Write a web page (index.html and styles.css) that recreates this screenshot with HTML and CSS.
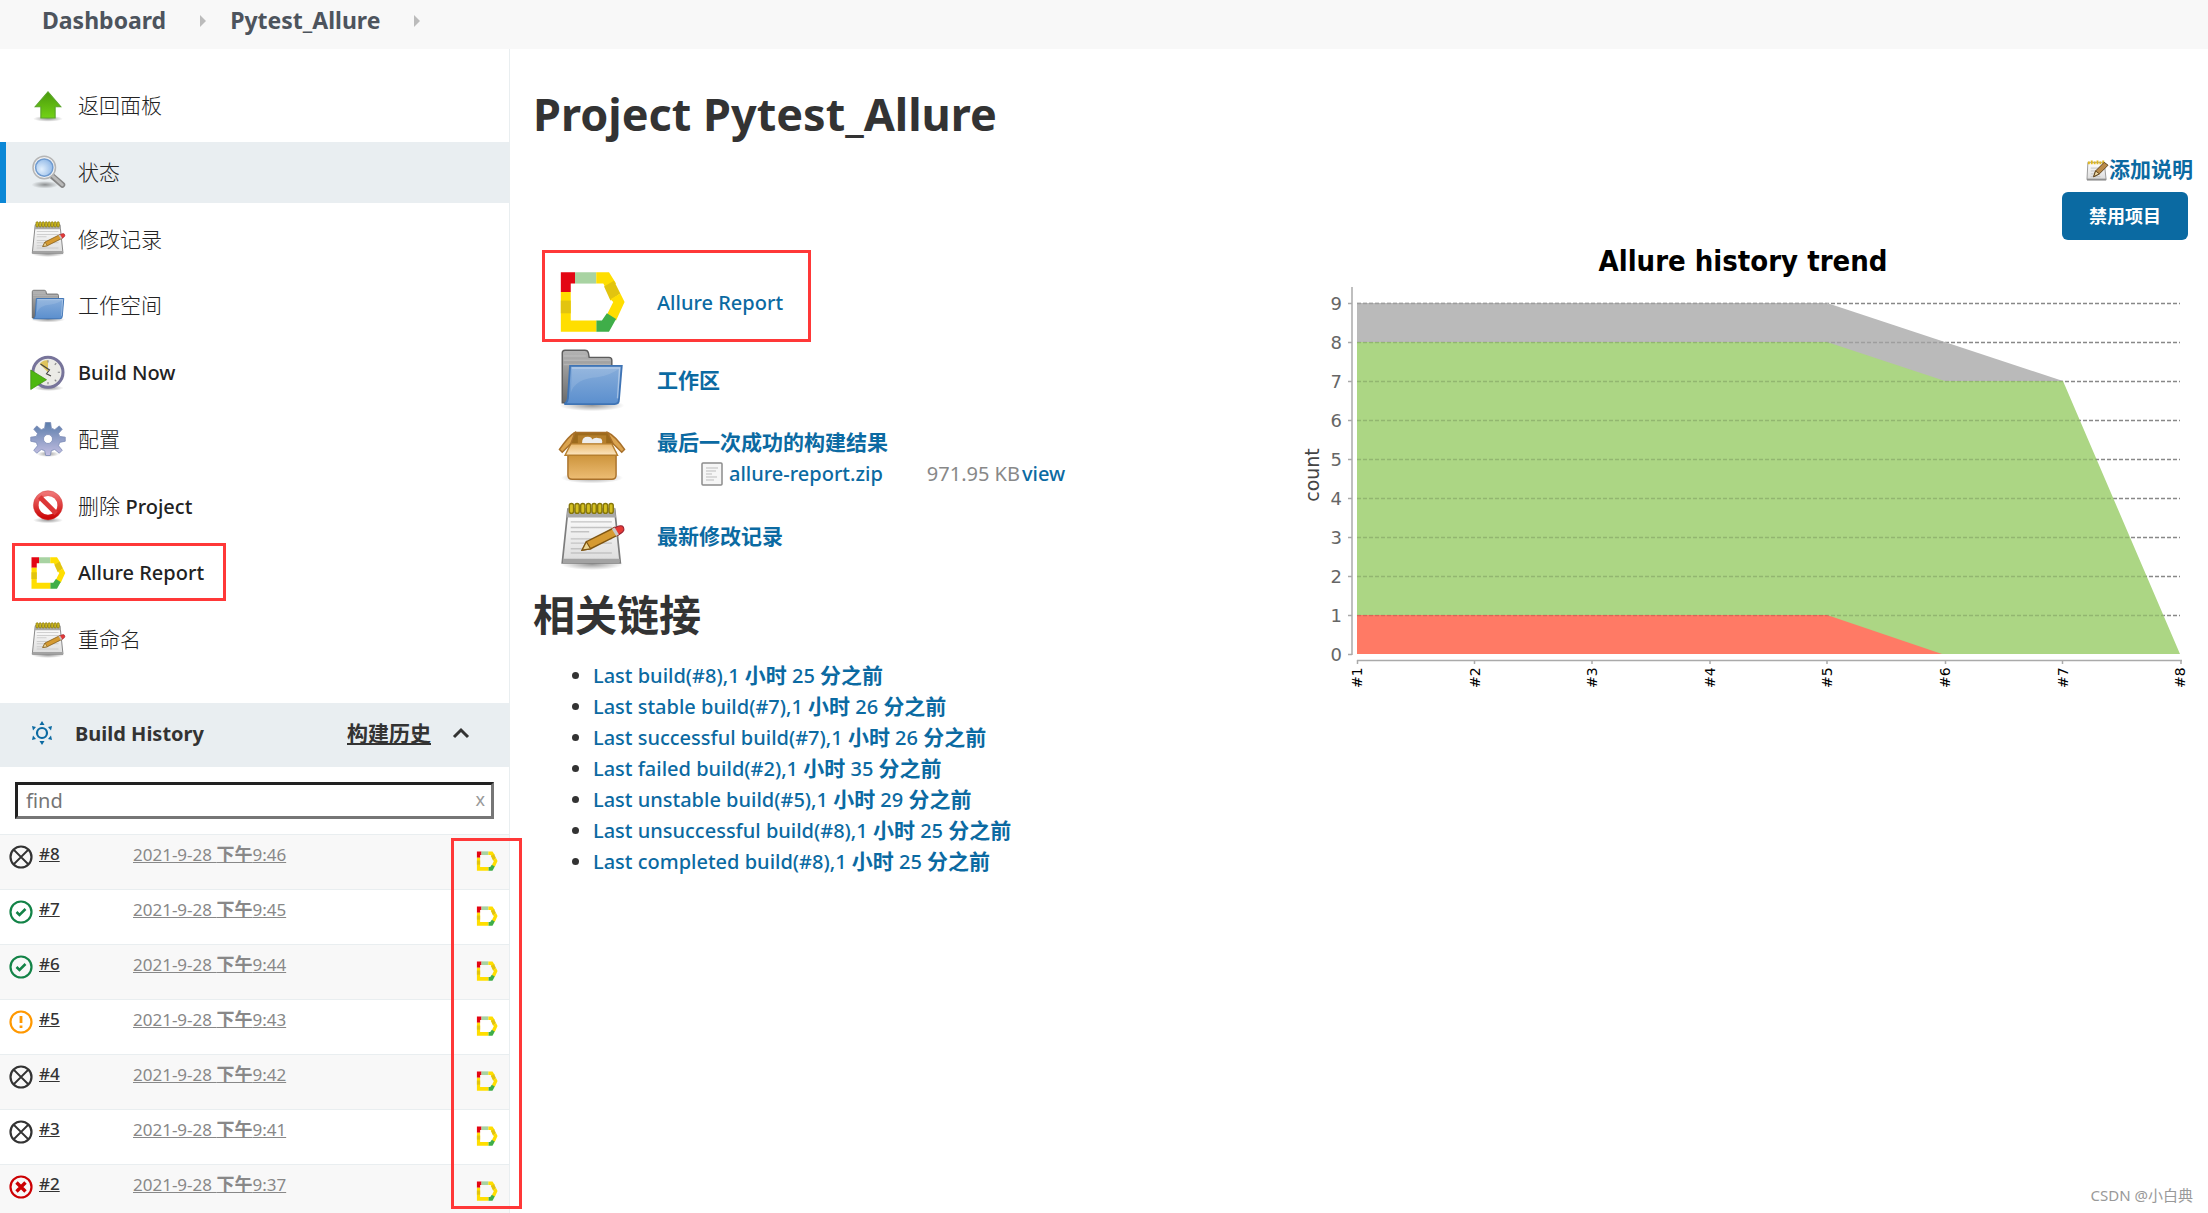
FILE: index.html
```html
<!DOCTYPE html>
<html lang="zh-CN">
<head>
    <meta charset="UTF-8">
    <meta name="viewport" content="width=device-width, initial-scale=1.0">
    <link rel="stylesheet" href="styles.css">
    <title>Pytest_Allure [Jenkins]</title>
</head>
<body>
    <!-- icon sprite -->
    <svg class="sprite" width="0" height="0" aria-hidden="true">
        <defs>
            <linearGradient id="gGreen" x1="0" y1="0" x2="0" y2="1"><stop offset="0" stop-color="#4a9a0c"/><stop offset="1" stop-color="#73d216"/></linearGradient>
            <linearGradient id="gBlue" x1="0" y1="0" x2="0" y2="1"><stop offset="0" stop-color="#88aedb"/><stop offset="1" stop-color="#5b8fce"/></linearGradient>
            <linearGradient id="gGrey" x1="0" y1="0" x2="0" y2="1"><stop offset="0" stop-color="#b4b4b4"/><stop offset="1" stop-color="#6b6b6b"/></linearGradient>
            <linearGradient id="gPaper" x1="0" y1="0" x2="0" y2="1"><stop offset="0" stop-color="#ffffff"/><stop offset="1" stop-color="#dcdcdc"/></linearGradient>
            <linearGradient id="gBox" x1="0" y1="0" x2="0" y2="1"><stop offset="0" stop-color="#c98f35"/><stop offset="1" stop-color="#edbd74"/></linearGradient>
            <linearGradient id="gFlap" x1="0" y1="0" x2="0" y2="1"><stop offset="0" stop-color="#e9b96e"/><stop offset="1" stop-color="#fce5c0"/></linearGradient>
            <linearGradient id="gCog" x1="0" y1="0" x2="0" y2="1"><stop offset="0" stop-color="#5b7dab"/><stop offset="1" stop-color="#c4bfe2"/></linearGradient>
            <linearGradient id="gRed" x1="0" y1="0" x2="0" y2="1"><stop offset="0" stop-color="#ef7373"/><stop offset="1" stop-color="#cc0808"/></linearGradient>
            <radialGradient id="gLens" cx=".35" cy=".6" r=".7"><stop offset="0" stop-color="#e3f0fd"/><stop offset="1" stop-color="#8db6e6"/></radialGradient>
            <radialGradient id="gShadow"><stop offset="0" stop-color="#000" stop-opacity=".4"/><stop offset="1" stop-color="#000" stop-opacity="0"/></radialGradient>
        </defs>

        <symbol id="i-up" viewBox="0 0 48 48">
            <ellipse cx="24" cy="41" rx="20" ry="4" fill="url(#gShadow)"/>
            <path d="M24 5 41 25H33.500V40H14.500V25H7Z" fill="url(#gGreen)" stroke="#5aa52a" stroke-width="1.500"/>
        </symbol>

        <symbol id="i-search" viewBox="0 0 48 48">
            <ellipse cx="20" cy="41" rx="18" ry="5" fill="url(#gShadow)"/>
            <path d="M29 29 43 41" stroke="#858585" stroke-width="8" stroke-linecap="round"/>
            <path d="M31 30 43 41" stroke="#b9b9b9" stroke-width="4" stroke-linecap="round"/>
            <circle cx="19" cy="18" r="15" fill="#f1f1f1" stroke="#b5b5b5" stroke-width="2"/>
            <circle cx="19" cy="18" r="11.500" fill="url(#gLens)" stroke="#6f9bd0" stroke-width="2"/>
        </symbol>

        <symbol id="i-note" viewBox="0 0 48 48">
            <ellipse cx="24" cy="44" rx="22" ry="4" fill="url(#gShadow)"/>
            <path d="M7 5H40L44 43H3Z" fill="url(#gPaper)" stroke="#7d7d7d" stroke-width="1.200"/>
            <path d="M7 4H40L41 11H6Z" fill="#a9a9a9"/>
            <path d="M3.500 40H43.500V43H3.500Z" fill="#a3a3a3"/>
            <path d="M9 14H38M9 18H38M9 21H22M9 26H38M9 29H38M9 33H20M9 36H38" stroke="#c3c3c3"/>
            <g fill="#d5c021" stroke="#86760a"><rect x="8" y="1" width="3" height="7" rx="1.500"/><rect x="12" y="1" width="3" height="7" rx="1.500"/><rect x="16" y="1" width="3" height="7" rx="1.500"/><rect x="20" y="1" width="3" height="7" rx="1.500"/><rect x="24" y="1" width="3" height="7" rx="1.500"/><rect x="28" y="1" width="3" height="7" rx="1.500"/><rect x="32" y="1" width="3" height="7" rx="1.500"/><rect x="36" y="1" width="3" height="7" rx="1.500"/></g>
            <path d="M17 34 20 28 40 18 43 23 23 33Z" fill="#d59a32" stroke="#7e5512"/>
            <path d="M17 34 20 28 23 33Z" fill="#ecd592" stroke="#7e5512" stroke-width=".8"/>
            <path d="M39 18.500 43 17Q46 16 46.500 19 47 21 42 23.500Z" fill="#e53a36" stroke="#923" stroke-width=".8"/>
            <path d="M38 19 40 18 43 23 41 24Z" fill="#c9c9c9"/>
        </symbol>

        <symbol id="i-edit" viewBox="0 0 24 24">
            <path d="M2 4H19L21 22H1Z" fill="url(#gPaper)" stroke="#999"/>
            <path d="M1 21H21V23H1Z" fill="#8f8f8f"/>
            <path d="M5 10H16M5 13H13M5 16H9M5 19H15" stroke="#c3c3c3"/>
            <path d="M3 3V6M6 2V6M9 3V6M12 2V6M15 3V6M18 2V6" stroke="#e0b820" stroke-width="2"/>
            <path d="M8 19 10 13 19 4 23 7 14 16Z" fill="#b98a48" stroke="#5e431c"/>
            <path d="M8 19 10 13 14 16Z" fill="#f0dca8" stroke="#5e431c"/>
        </symbol>

        <symbol id="i-folder" viewBox="0 0 48 48">
            <ellipse cx="24" cy="42" rx="23" ry="4" fill="url(#gShadow)"/>
            <path d="M3 5Q3 3 5 3H19Q21 3 21.500 5L22 8H36Q38 8 38 10V40H3Z" fill="url(#gGrey)" stroke="#5c5c5c"/>
            <path d="M4 7H20M4 10H37M4 13H37" stroke="#ccc" stroke-opacity=".4"/>
            <path d="M8.500 14H45L43 38Q43 41 40 41H4.500Q6.500 40 7 37Z" fill="url(#gBlue)" stroke="#3f74b5" stroke-width="1.300"/>
            <path d="M9.800 15.500H43.500L42 37" fill="none" stroke="#fff" stroke-opacity=".4"/>
            <path d="M9 33Q12 23 28 22 38 20 43 16H10Z" fill="#fff" opacity=".12"/>
        </symbol>

        <symbol id="i-build" viewBox="0 0 48 48">
            <ellipse cx="25" cy="44" rx="20" ry="4" fill="url(#gShadow)"/>
            <circle cx="24" cy="23" r="20" fill="#ebebe6" stroke="#77749a" stroke-width="4"/>
            <path d="M24 23 13 12Q17 6 24 7Z" fill="#dfc45b"/>
            <path d="M14 12 26 20 22 25 28 28" fill="none" stroke="#444" stroke-width="1.500"/>
            <path d="M24 7V10M24 36V39M37 23H40M33 13 35 11M33 33 35 35" stroke="#888" stroke-width="1.500"/>
            <path d="M1 20 22 33 1 46Z" fill="#4eb810" stroke="#3f8f10"/>
        </symbol>

        <symbol id="i-cog" viewBox="0 0 48 48">
            <ellipse cx="24" cy="44" rx="15" ry="4" fill="url(#gShadow)"/>
            <path fill-rule="evenodd" fill="url(#gCog)" stroke="#7787b3" d="M20.500 2H27.500L28.500 9.500 33 11.500 39 6.500 43 11 38 16.500 39.500 20.500 47 21.500V27L39.500 28.500 38 33 43 39 39 43 33 38 28.500 39.500 27 46H21L19.500 39.500 15 38 9 43 5 39 10 33 8.500 28.500 1 27V21.500L8.500 20.500 10 16.500 5 11 9 6.500 15 11.500 19.500 9.500ZM24 18A6 6 0 1 0 24 30 6 6 0 1 0 24 18Z"/>
        </symbol>

        <symbol id="i-stop" viewBox="0 0 48 48">
            <ellipse cx="24" cy="43" rx="20" ry="4" fill="url(#gShadow)"/>
            <circle cx="24" cy="23" r="16" fill="#fff" stroke="url(#gRed)" stroke-width="7"/>
            <path d="M13 12 35 34" stroke="#dc3636" stroke-width="6.500"/>
            <circle cx="24" cy="23" r="19.500" fill="none" stroke="#c33" stroke-opacity=".5"/>
        </symbol>

        <symbol id="i-allure" viewBox="0 0 48 48">
            <path d="M2 3H12V11H9V17H2Z" fill="#e30613"/>
            <path d="M12 3H27V11H12Z" fill="#a8d3a2"/>
            <path d="M27 3H36L41 11 34 15 32 11H27Z" fill="#ffde00"/>
            <path d="M39.500 9 44 18 37 23 32.500 13Z" fill="#e2c40f"/>
            <path d="M44 18 47 24 41 37 34.500 33 39 24 37 22Z" fill="#ffde00"/>
            <path d="M27 37H31L34.500 32 41 36 36 45H27Z" fill="#3fae49"/>
            <path d="M2 17H9V37H27V45H2Z" fill="#ffde00"/>
            <path d="M2 23H9V32H2Z" fill="#e2c40f"/>
        </symbol>

        <symbol id="i-box" viewBox="0 0 48 48">
            <ellipse cx="24" cy="38" rx="22" ry="4" fill="url(#gShadow)"/>
            <path d="M11 6H36L40 13 36 20H9L7 13Z" fill="#9c6a1c"/>
            <path d="M14 8H34V14H14Z" fill="#b57f2c"/>
            <path d="M17 13Q17 9 21 9 24 9 24 11 26 9 29 10 32 10 31 14H17Z" fill="#eee"/>
            <path d="M7 20H41V36Q41 39 38 39H10Q7 39 7 36Z" fill="url(#gBox)" stroke="#a8702a"/>
            <path d="M9 14H38L42 22H5Z" fill="url(#gFlap)" stroke="#b67f2e"/>
            <path d="M12 6 9 14 3 20 1 18Q8 8 12 6Z" fill="#dba450" stroke="#a8702a"/>
            <path d="M35 6 39 14 45 20 47 18Q40 8 35 6Z" fill="#dba450" stroke="#a8702a"/>
            <path d="M12 6H35" stroke="#a8702a"/>
        </symbol>

        <symbol id="i-text" viewBox="0 0 22 24">
            <rect x="1" y="1" width="20" height="22" rx="1" fill="#f6f6f6" stroke="#8c8c8c" stroke-width="1.500"/>
            <path d="M5 6H17M5 9H15M5 12H11M5 15H16M5 18H13" stroke="#bdbdbd"/>
        </symbol>

        <symbol id="s-aborted" viewBox="0 0 24 24">
            <circle cx="12" cy="12" r="10.500" fill="none" stroke="currentColor" stroke-width="2.200"/>
            <path d="M5 5 19 19M19 5 5 19" stroke="currentColor" stroke-width="1.800"/>
        </symbol>
        <symbol id="s-ok" viewBox="0 0 24 24">
            <circle cx="12" cy="12" r="10.500" fill="none" stroke="currentColor" stroke-width="2.200"/>
            <path d="M7.500 12 10.500 15 16.500 9" fill="none" stroke="currentColor" stroke-width="2.500"/>
        </symbol>
        <symbol id="s-warn" viewBox="0 0 24 24">
            <circle cx="12" cy="12" r="10.500" fill="none" stroke="currentColor" stroke-width="2.200"/>
            <path d="M12 6V13M12 15.500V18" stroke="currentColor" stroke-width="2.800"/>
        </symbol>
        <symbol id="s-fail" viewBox="0 0 24 24">
            <circle cx="12" cy="12" r="10.500" fill="none" stroke="currentColor" stroke-width="2.200"/>
            <path d="M7.500 7.500 16.500 16.500M16.500 7.500 7.500 16.500" stroke="currentColor" stroke-width="3.400"/>
        </symbol>
    </svg>

    <nav class="breadcrumbs">
        <a href="#">Dashboard</a>
        <span class="arrow"></span>
        <a href="#">Pytest_Allure</a>
        <span class="arrow"></span>
    </nav>

    <div class="page">
        <aside class="side-panel">
            <nav class="tasks">
                <a class="task" href="#"><svg><use href="#i-up"/></svg>返回面板</a>
                <a class="task active" href="#"><svg><use href="#i-search"/></svg>状态</a>
                <a class="task" href="#"><svg><use href="#i-note"/></svg>修改记录</a>
                <a class="task" href="#"><svg><use href="#i-folder"/></svg>工作空间</a>
                <a class="task en" href="#"><svg><use href="#i-build"/></svg>Build Now</a>
                <a class="task" href="#"><svg><use href="#i-cog"/></svg>配置</a>
                <a class="task" href="#"><svg><use href="#i-stop"/></svg><span>删除 <span class="en">Project</span></span></a>
                <a class="task en marked" href="#"><svg><use href="#i-allure"/></svg>Allure Report</a>
                <a class="task" href="#"><svg><use href="#i-note"/></svg>重命名</a>
            </nav>

            <section class="history">
                <header class="history-header">
                    <svg class="weather" viewBox="0 0 22 24">
                        <circle cx="11" cy="12" r="5" fill="none" stroke="#0b6aa2" stroke-width="2.200"/>
                        <path d="M11 0 13.500 4H8.500ZM11 24 13.500 20H8.500ZM1 5 5 6 2 9.500ZM21 5 17 6 20 9.500ZM1 19 5 18 2 14.500ZM21 19 17 18 20 14.500Z" fill="#0b6aa2"/>
                    </svg>
                    <span class="history-title">Build History</span>
                    <a class="trend" href="#">构建历史</a>
                    <svg class="chevron" viewBox="0 0 18 12"><path d="M2 10 9 3 16 10" fill="none" stroke="#333" stroke-width="3"/></svg>
                </header>
                <div class="search">
                    <input type="text" placeholder="find" aria-label="find">
                    <button type="button" class="clear">x</button>
                </div>
                <table class="builds">
                    <tr>
                        <td class="num"><svg class="aborted"><use href="#s-aborted"/></svg><a href="#">#8</a></td>
                        <td class="date"><a href="#">2021-9-28 <b>下午</b>9:46</a></td>
                        <td class="badge"><svg><use href="#i-allure"/></svg></td>
                    </tr>
                    <tr>
                        <td class="num"><svg class="ok"><use href="#s-ok"/></svg><a href="#">#7</a></td>
                        <td class="date"><a href="#">2021-9-28 <b>下午</b>9:45</a></td>
                        <td class="badge"><svg><use href="#i-allure"/></svg></td>
                    </tr>
                    <tr>
                        <td class="num"><svg class="ok"><use href="#s-ok"/></svg><a href="#">#6</a></td>
                        <td class="date"><a href="#">2021-9-28 <b>下午</b>9:44</a></td>
                        <td class="badge"><svg><use href="#i-allure"/></svg></td>
                    </tr>
                    <tr>
                        <td class="num"><svg class="warn"><use href="#s-warn"/></svg><a href="#">#5</a></td>
                        <td class="date"><a href="#">2021-9-28 <b>下午</b>9:43</a></td>
                        <td class="badge"><svg><use href="#i-allure"/></svg></td>
                    </tr>
                    <tr>
                        <td class="num"><svg class="aborted"><use href="#s-aborted"/></svg><a href="#">#4</a></td>
                        <td class="date"><a href="#">2021-9-28 <b>下午</b>9:42</a></td>
                        <td class="badge"><svg><use href="#i-allure"/></svg></td>
                    </tr>
                    <tr>
                        <td class="num"><svg class="aborted"><use href="#s-aborted"/></svg><a href="#">#3</a></td>
                        <td class="date"><a href="#">2021-9-28 <b>下午</b>9:41</a></td>
                        <td class="badge"><svg><use href="#i-allure"/></svg></td>
                    </tr>
                    <tr>
                        <td class="num"><svg class="fail"><use href="#s-fail"/></svg><a href="#">#2</a></td>
                        <td class="date"><a href="#">2021-9-28 <b>下午</b>9:37</a></td>
                        <td class="badge"><svg><use href="#i-allure"/></svg></td>
                    </tr>
                </table>
            </section>
        </aside>

        <main class="main-panel">
            <h1>Project Pytest_Allure</h1>
            <div class="columns">
                <div class="summary">
                    <div class="entry marked"><svg><use href="#i-allure"/></svg><a href="#">Allure Report</a></div>
                    <div class="entry"><svg><use href="#i-folder"/></svg><a href="#"><b>工作区</b></a></div>
                    <div class="entry">
                        <svg><use href="#i-box"/></svg>
                        <div class="artifacts">
                            <a href="#"><b>最后一次成功的构建结果</b></a>
                            <div class="file">
                                <svg><use href="#i-text"/></svg>
                                <a href="#">allure-report.zip</a>
                                <span class="size">971.95 KB</span>
                                <a href="#">view</a>
                            </div>
                        </div>
                    </div>
                    <div class="entry"><svg><use href="#i-note"/></svg><a href="#"><b>最新修改记录</b></a></div>

                    <h2>相关链接</h2>
                    <ul class="permalinks">
                        <li><a href="#">Last build(#8),1 <b>小时</b> 25 <b>分之前</b></a></li>
                        <li><a href="#">Last stable build(#7),1 <b>小时</b> 26 <b>分之前</b></a></li>
                        <li><a href="#">Last successful build(#7),1 <b>小时</b> 26 <b>分之前</b></a></li>
                        <li><a href="#">Last failed build(#2),1 <b>小时</b> 35 <b>分之前</b></a></li>
                        <li><a href="#">Last unstable build(#5),1 <b>小时</b> 29 <b>分之前</b></a></li>
                        <li><a href="#">Last unsuccessful build(#8),1 <b>小时</b> 25 <b>分之前</b></a></li>
                        <li><a href="#">Last completed build(#8),1 <b>小时</b> 25 <b>分之前</b></a></li>
                    </ul>
                </div>

                <div class="right">
                    <a class="describe" href="#"><svg><use href="#i-edit"/></svg><b>添加说明</b></a>
                    <button type="button" class="disable">禁用项目</button>
                    <svg class="chart" viewBox="0 0 900 460" role="img" aria-label="Allure history trend">
                        <text class="chart-title" x="453" y="31" text-anchor="middle">Allure history trend</text>
                        <g class="grid">
                            <path d="M67 63.500H890M67 102.500H890M67 141.500H890M67 180.500H890M67 219.500H890M67 258.500H890M67 297.500H890M67 336.500H890M67 375.500H890"/>
                        </g>
                        <path d="M67 63H537L773 141V414H67Z" fill="#bababa"/>
                        <path d="M67 102H537L655 141H773L890 414H67Z" fill="#acd684"/>
                        <path d="M67 375H537L652 414H67Z" fill="#ff7a65"/>
                        <g class="grid over">
                            <path d="M67 63.500H537M67 102.500H655M67 141.500H773M67 180.500H790M67 219.500H807M67 258.500H823M67 297.500H840M67 336.500H857M67 375.500H873"/>
                        </g>
                        <path class="axis" d="M62 47V415M58 63.500H62M58 102.500H62M58 141.500H62M58 180.500H62M58 219.500H62M58 258.500H62M58 297.500H62M58 336.500H62M58 375.500H62M58 414.500H62"/>
                        <path class="axis" d="M67 420.500H892M67.500 420V424M184.500 420V424M302 420V424M420 420V424M537 420V424M655.500 420V424M772.500 420V424M891 420V424"/>
                        <g class="ticks" text-anchor="end">
                            <text x="52" y="70">9</text>
                            <text x="52" y="109">8</text>
                            <text x="52" y="148">7</text>
                            <text x="52" y="187">6</text>
                            <text x="52" y="226">5</text>
                            <text x="52" y="265">4</text>
                            <text x="52" y="304">3</text>
                            <text x="52" y="343">2</text>
                            <text x="52" y="382">1</text>
                            <text x="52" y="421">0</text>
                        </g>
                        <text class="y-label" transform="translate(29 235) rotate(-90)" text-anchor="middle">count</text>
                        <g class="x-ticks">
                            <text transform="translate(72 448) rotate(-90)">#1</text>
                            <text transform="translate(190 448) rotate(-90)">#2</text>
                            <text transform="translate(307 448) rotate(-90)">#3</text>
                            <text transform="translate(425 448) rotate(-90)">#4</text>
                            <text transform="translate(542 448) rotate(-90)">#5</text>
                            <text transform="translate(660 448) rotate(-90)">#6</text>
                            <text transform="translate(778 448) rotate(-90)">#7</text>
                            <text transform="translate(895 448) rotate(-90)">#8</text>
                        </g>
                    </svg>
                </div>
            </div>
        </main>
    </div>

    <div class="watermark">CSDN @小白典</div>
</body>
</html>
```

FILE: styles.css
```css
*,
*::after {
    box-sizing: border-box;
}

body {
    margin: 0;
    height: 100vh;
    overflow: hidden;
    background-color: white;
    color: #333;
    font-family: "Noto Sans", "Noto Sans CJK SC", sans-serif;
    font-size: 20px;
    line-height: 31px;
}

a {
    color: #0b6aa2;
    font-weight: 500;
    text-decoration: none;
}

b {
    font-weight: 700;
}

.sprite {
    position: absolute;
}

/* top bar */
.breadcrumbs {
    display: flex;
    align-items: center;
    height: 49px;
    padding: 0 42px 8px;
    background-color: #f8f8f8;
}

.breadcrumbs a {
    color: #4d545d;
    font-size: 23px;
    font-weight: 700;
}

.arrow {
    margin: 0 24px 0 34px;
    border: 6px solid transparent;
    border-left-color: #bbb;
    border-right: none;
}

.page {
    display: flex;
}

/* left side */
.side-panel {
    flex: none;
    width: 510px;
    border-right: 1px solid #e9eef0;
}

.tasks {
    display: flex;
    flex-direction: column;
    justify-content: space-between;
    min-height: 595px;
    margin: 26px 0 33px;
}

.task {
    display: flex;
    align-items: center;
    gap: 12px;
    height: 61px;
    padding-left: 24px;
    border-left: 6px solid transparent;
    color: #222;
    font-size: 21px;
    font-weight: 300;
}

.task svg {
    width: 36px;
    height: 36px;
}

.task.active {
    background-color: #e9eef1;
    border-left-color: #0b87d6;
}

.en {
    font-size: 20px;
    font-weight: 500;
}

.marked {
    position: relative;
}

.marked::after {
    content: "";
    position: absolute;
    border: 3px solid #ff3838;
}

.task.marked::after {
    top: 1px;
    left: 6px;
    width: 214px;
    height: 58px;
}

.history-header {
    display: flex;
    align-items: center;
    height: 64px;
    padding: 0 39px 4px 31px;
    background-color: #e9eef1;
}

.weather {
    width: 22px;
    height: 24px;
}

.history-title {
    margin-left: 22px;
    font-weight: 700;
}

.trend {
    margin-left: auto;
    color: #333;
    font-size: 21px;
    font-weight: 700;
    text-decoration: underline;
}

.chevron {
    width: 18px;
    height: 12px;
    margin-left: 21px;
}

.search {
    position: relative;
    padding: 15px;
}

.search input {
    display: block;
    width: 100%;
    height: 37px;
    padding: 0 8px;
    border: 3px inset #767676;
    font: inherit;
}

.search input::placeholder {
    color: #757575;
}

.clear {
    position: absolute;
    top: 18px;
    right: 20px;
    padding: 0 4px;
    border: none;
    background: none;
    color: #999;
    font: inherit;
    font-size: 18px;
    line-height: 28px;
}

.history {
    position: relative;
}

.history::after {
    content: "";
    position: absolute;
    top: 135px;
    right: -13px;
    width: 71px;
    height: 371px;
    border: 3px solid #ff3838;
}

.builds {
    width: 100%;
    border-collapse: collapse;
    font-size: 17px;
    line-height: 24px;
}

.builds tr {
    height: 55px;
    border-top: 1px solid #e9eef0;
}

.builds tr:nth-child(odd) {
    background-color: #f8f8f8;
}

.builds td {
    padding: 7px 0 0;
    vertical-align: top;
}

.builds a {
    color: #333;
    text-decoration: underline;
}

.builds .num {
    width: 133px;
    padding-left: 9px;
}

.num svg {
    width: 24px;
    height: 24px;
    margin: 3px 6px 0 0;
    float: left;
}

.builds .date a {
    color: #888;
    font-weight: 400;
}

.date b {
    font-size: 18px;
}

.builds .badge {
    width: 33px;
    padding-top: 15px;
}

.badge svg {
    display: block;
    width: 22px;
    height: 22px;
}

.aborted {
    color: #333;
}

.ok {
    color: #138347;
}

.warn {
    color: #ff9800;
}

.fail {
    color: #cc0003;
}

/* project page */
.main-panel {
    flex: 1;
    padding: 0 15px 0 23px;
}

h1 {
    margin: 32px 0 0;
    font-size: 45px;
    line-height: 66px;
}

h2 {
    margin: 9px 0 14px;
    font-size: 42px;
    line-height: 62px;
}

.columns {
    display: flex;
    justify-content: space-between;
}

.summary {
    padding-top: 116px;
}

.entry {
    display: flex;
    align-items: center;
    gap: 31px;
    min-height: 78px;
    padding-left: 25px;
}

.entry svg {
    width: 68px;
    height: 68px;
}

.entry b,
.permalinks b,
.describe {
    font-size: 21px;
}

.entry.marked::after {
    top: -13px;
    left: 9px;
    width: 269px;
    height: 92px;
}

.file {
    display: flex;
    align-items: center;
    padding-left: 44px;
}

.artifacts .file svg {
    width: 22px;
    height: 24px;
    margin-right: 6px;
}

.size {
    margin: 0 2px 0 44px;
    color: #888;
}

.permalinks {
    margin: 0;
    padding-left: 60px;
}

.right {
    display: flex;
    flex-direction: column;
    align-items: flex-end;
    padding-top: 7px;
}

.describe {
    display: flex;
    align-items: center;
}

.describe svg {
    width: 23px;
    height: 24px;
}

.disable {
    height: 48px;
    margin: 7px 5px 0 0;
    padding: 0 27px;
    border: none;
    border-radius: 6px;
    background-color: #0b6aa2;
    color: white;
    font: inherit;
    font-size: 18px;
    font-weight: 700;
}

.chart {
    width: 900px;
    height: 460px;
    margin-right: 3px;
}

.chart text {
    font-family: "DejaVu Sans", sans-serif;
}

.chart .chart-title {
    font-family: "DejaVu Sans Condensed", "DejaVu Sans", sans-serif;
    font-size: 29px;
    font-weight: 700;
    fill: black;
}

.grid {
    stroke: #888;
    stroke-width: 1.5;
    stroke-dasharray: 4 2;
}

.over {
    stroke: #000;
    stroke-opacity: .15;
}

.axis {
    fill: none;
    stroke: #aaa;
    stroke-width: 1.5;
}

.ticks {
    font-size: 18px;
    fill: #666;
}

.y-label {
    font-size: 19px;
    fill: #444;
}

.x-ticks {
    font-size: 14px;
    fill: black;
}

.watermark {
    position: absolute;
    right: 15px;
    bottom: 6px;
    color: #999;
    font-size: 15px;
    line-height: 24px;
}
```
